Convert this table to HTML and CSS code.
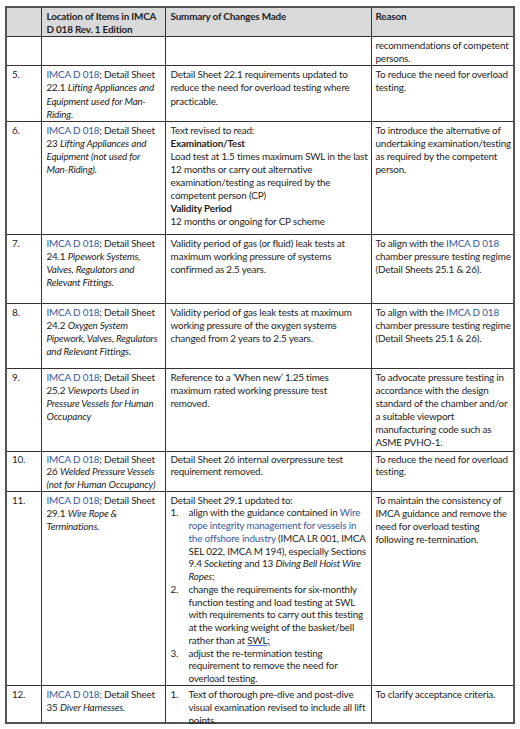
FILE: index.html
```html
<!DOCTYPE html>
<html>
<head>
<meta charset="utf-8">
<link rel="stylesheet" href="styles.css">
</head>
<body>
<div class="page">
<table class="changes">
  <colgroup>
    <col class="c1"><col class="c2"><col class="c3"><col class="c4">
  </colgroup>
  <tr class="r-head">
    <th></th>
    <th>Location of Items in IMCA D 018 Rev. 1 Edition</th>
    <th>Summary of Changes Made</th>
    <th class="reason">Reason</th>
  </tr>
  <tr class="r-cont">
    <td></td><td></td><td></td>
    <td class="reason">recommendations of competent persons.</td>
  </tr>
  <tr class="r5">
    <td>5.</td>
    <td><span class="link">IMCA D 018</span>; Detail Sheet 22.1 <i>Lifting Appliances and Equipment used for Man-Riding.</i></td>
    <td>Detail Sheet 22.1 requirements updated to reduce the need for overload testing where practicable.</td>
    <td class="reason">To reduce the need for overload testing.</td>
  </tr>
  <tr class="r6">
    <td>6.</td>
    <td><span class="link">IMCA D 018</span>; Detail Sheet 23 <i>Lifting Appliances and Equipment (not used for Man-Riding).</i></td>
    <td>
      <p>Text revised to read:</p>
      <p class="b">Examination/Test</p>
      <p>Load test at 1.5 times maximum SWL in the last 12 months or carry out alternative examination/testing as required by the competent person (CP)</p>
      <p class="b">Validity Period</p>
      <p>12 months or ongoing for CP scheme</p>
    </td>
    <td class="reason">To introduce the alternative of undertaking examination/testing as required by the competent person.</td>
  </tr>
  <tr class="r7">
    <td>7.</td>
    <td><span class="link">IMCA D 018</span>; Detail Sheet 24.1 <i>Pipework Systems, Valves, Regulators and Relevant Fittings.</i></td>
    <td>Validity period of gas (or fluid) leak tests at maximum working pressure of systems confirmed as 2.5 years.</td>
    <td class="reason">To align with the <span class="link">IMCA D 018</span> chamber pressure testing regime (Detail Sheets 25.1 &amp; 26).</td>
  </tr>
  <tr class="r8">
    <td>8.</td>
    <td><span class="link">IMCA D 018</span>; Detail Sheet 24.2 <i>Oxygen System Pipework, Valves, Regulators and Relevant Fittings.</i></td>
    <td>Validity period of gas leak tests at maximum working pressure of the oxygen systems changed from 2 years to 2.5 years.</td>
    <td class="reason">To align with the <span class="link">IMCA D 018</span> chamber pressure testing regime (Detail Sheets 25.1 &amp; 26).</td>
  </tr>
  <tr class="r9">
    <td>9.</td>
    <td><span class="link">IMCA D 018</span>; Detail Sheet 25.2 <i>Viewports Used in Pressure Vessels for Human Occupancy</i></td>
    <td>Reference to a ‘When new’ 1.25 times maximum rated working pressure test<br>removed.</td>
    <td class="reason">To advocate pressure testing in accordance with the design standard of the chamber and/or a suitable viewport manufacturing code such as ASME PVHO-1.</td>
  </tr>
  <tr class="r10">
    <td>10.</td>
    <td><span class="link">IMCA D 018</span>; Detail Sheet 26 <i>Welded Pressure Vessels (not for Human Occupancy)</i></td>
    <td>Detail Sheet 26 internal overpressure test requirement removed.</td>
    <td class="reason">To reduce the need for overload testing.</td>
  </tr>
  <tr class="r11">
    <td>11.</td>
    <td><span class="link">IMCA D 018</span>; Detail Sheet 29.1 <i>Wire Rope &amp; Terminations.</i></td>
    <td class="tight">
      <p>Detail Sheet 29.1 updated to:</p>
      <div class="item"><span class="num">1.</span><span class="txt">align with the guidance contained in <span class="link">Wire rope integrity management for vessels in the offshore industry</span> (IMCA LR 001, IMCA SEL 022, IMCA M 194), especially Sections 9.4 <i>Socketing</i> and 13 <i>Diving Bell Hoist Wire Ropes</i>;</span></div>
      <div class="item"><span class="num">2.</span><span class="txt">change the requirements for six-monthly function testing and load testing at SWL with requirements to carry out this testing at the working weight of the basket/bell rather than at <span class="mark">SWL;</span></span></div>
      <div class="item"><span class="num">3.</span><span class="txt">adjust the re-termination testing requirement to remove the need for overload testing.</span></div>
    </td>
    <td class="reason">To maintain the consistency of IMCA guidance and remove the need for overload testing following re-termination.</td>
  </tr>
  <tr class="r12">
    <td>12.</td>
    <td><span class="link">IMCA D 018;</span> Detail Sheet 35 <i>Diver Harnesses.</i></td>
    <td><div class="item overflow"><span class="num">1.</span><span class="txt">Text of thorough pre-dive and post-dive visual examination revised to include all lift points.</span></div></td>
    <td class="reason">To clarify acceptance criteria.</td>
  </tr>
</table>
</div>
</body>
</html>
```

FILE: styles.css
```css
html, body {
  margin: 0;
  padding: 0;
  background: #ffffff;
}

body {
  font-family: Lato, "Open Sans", sans-serif;
  font-size: 9.9px;
  letter-spacing: -0.18px;
  color: #1e1e1e;
}

.page {
  padding: 6px 0 0 5px;
}

.changes {
  border-collapse: collapse;
  table-layout: fixed;
  width: 508px;
  border: 2px solid #555555;
}

.c1 { width: 35px; }
.c2 { width: 124px; }
.c3 { width: 206px; }
.c4 { width: 143px; }

.changes th,
.changes td {
  border: 1px solid #333333;
  vertical-align: top;
  text-align: left;
  padding: 2px 1px 0 5px;
  line-height: 13.1px;
}

.changes .reason {
  padding-left: 4px;
  padding-right: 0;
}

.changes .tight {
  line-height: 12.75px;
}

.changes .r10 td {
  line-height: 12.6px;
  padding-top: 1px;
}

.changes th {
  background: #d9d9d9;
  font-weight: bold;
}

.changes p {
  margin: 0;
}

.b {
  font-weight: bold;
}

.link {
  color: #3558a6;
}

.mark {
  text-decoration: underline;
  text-decoration-color: #4a78d0;
}

.item {
  display: flex;
}

.num {
  flex: none;
  width: 18px;
}

.txt {
  flex: 1;
}

.overflow {
  margin-bottom: -6px;
}

.r-head { height: 27px; }
.r-cont { height: 27px; }
.r5 { height: 54px; }
.r6 { height: 113px; }
.r7 { height: 69px; }
.r8 { height: 65px; }
.r9 { height: 83px; }
.r10 { height: 38px; }
.r11 { height: 191px; }
.r12 { height: 38px; }
```
